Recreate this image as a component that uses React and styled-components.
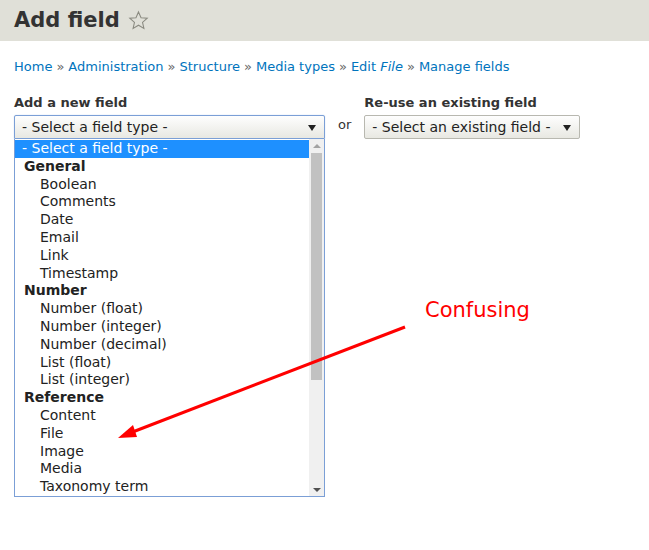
import React from "react";
import styled, { createGlobalStyle } from "styled-components";

const Global = createGlobalStyle`
  html, body { margin: 0; padding: 0; background: #fff; }
  body { font-family: "DejaVu Sans", "Liberation Sans", sans-serif; color: #333; }
`;

const Page = styled.div`
  position: relative;
  width: 649px;
  height: 550px;
  overflow: hidden;
`;

const Header = styled.header`
  height: 41px;
  background: #e0e0d8;
  display: flex;
  align-items: center;
  gap: 8px;
  padding-left: 14px;
  box-sizing: border-box;
`;

const Title = styled.h1`
  margin: 0;
  font-size: 21px;
  font-weight: bold;
  color: #333;
  line-height: 1;
`;

const Content = styled.main`
  padding: 17px 14px 0 14px;
`;

const Crumbs = styled.nav`
  font-size: 13px;
  line-height: 18px;
  color: #555;
  display: flex;
  gap: 4px;
  align-items: center;
`;

const Crumb = styled.a`
  color: #0074bd;
  text-decoration: none;
`;

const Sep = styled.span`
  color: #666;
  font-size: 13px;
`;

const Row = styled.div`
  display: flex;
  align-items: flex-start;
  margin-top: 18px;
`;

const Field = styled.div`
  display: flex;
  flex-direction: column;
  width: ${(p) => p.$w}px;
`;

const Label = styled.label`
  font-size: 13px;
  font-weight: bold;
  line-height: 18px;
  color: #333;
  margin-bottom: 3px;
`;

const SelectBox = styled.div`
  height: 24px;
  box-sizing: border-box;
  border: 1px solid ${(p) => (p.$focus ? "#7b9fd6" : "#b8b8b0")};
  border-radius: ${(p) => (p.$focus ? "2px 2px 0 0" : "2px")};
  background: linear-gradient(#fefefe, #e8e8e2);
  display: flex;
  align-items: center;
  justify-content: space-between;
  padding: 0 8px 0 7px;
  font-size: 14px;
  color: #222;
  box-shadow: ${(p) => (p.$focus ? "0 0 1px #9ab8e6" : "none")};
`;

const Caret = styled.span`
  width: 0;
  height: 0;
  border-left: 4.5px solid transparent;
  border-right: 4.5px solid transparent;
  border-top: 6px solid #222;
  margin-top: 1px;
`;

const Or = styled.span`
  font-size: 13px;
  color: #333;
  margin: 22px 13px 0 13px;
  line-height: 18px;
`;

const ListBox = styled.div`
  height: 358px;
  box-sizing: border-box;
  border: 1px solid #7b9fd6;
  border-top: none;
  display: flex;
  background: #fff;
`;

const Options = styled.div`
  flex: 1;
  padding-top: 1px;
`;

const Opt = styled.div`
  height: 17.8px;
  line-height: 17.8px;
  font-size: 14px;
  white-space: nowrap;
  padding-left: ${(p) => (p.$kind === "group" ? 9 : p.$kind === "sel" ? 7 : 25)}px;
  font-weight: ${(p) => (p.$kind === "group" ? "bold" : "normal")};
  background: ${(p) => (p.$kind === "sel" ? "#1e90ff" : "transparent")};
  color: ${(p) => (p.$kind === "sel" ? "#fff" : "#222")};
`;

const Scrollbar = styled.div`
  width: 15px;
  background: #f0f0f0;
  display: flex;
  flex-direction: column;
  align-items: center;
`;

const ScrollBtn = styled.div`
  height: 13px;
  width: 15px;
  display: flex;
  align-items: center;
  justify-content: center;
`;

const Tri = styled.span`
  width: 0;
  height: 0;
  border-left: 4px solid transparent;
  border-right: 4px solid transparent;
  ${(p) => (p.$up ? "border-bottom: 4px solid #a3a3a3;" : "border-top: 4px solid #505050;")}
`;

const Thumb = styled.div`
  width: 11px;
  height: 227px;
  background: #c1c1c1;
  margin-top: 1px;
`;

const Spacer = styled.div`
  flex: 1;
`;

const Annotation = styled.div`
  position: absolute;
  left: 425px;
  top: 298px;
  font-size: 21px;
  color: #f00;
  font-family: "DejaVu Sans", sans-serif;
`;

const Overlay = styled.svg`
  position: absolute;
  left: 0;
  top: 0;
  pointer-events: none;
`;

const items = [
  ["sel", "- Select a field type -"],
  ["group", "General"],
  ["opt", "Boolean"],
  ["opt", "Comments"],
  ["opt", "Date"],
  ["opt", "Email"],
  ["opt", "Link"],
  ["opt", "Timestamp"],
  ["group", "Number"],
  ["opt", "Number (float)"],
  ["opt", "Number (integer)"],
  ["opt", "Number (decimal)"],
  ["opt", "List (float)"],
  ["opt", "List (integer)"],
  ["group", "Reference"],
  ["opt", "Content"],
  ["opt", "File"],
  ["opt", "Image"],
  ["opt", "Media"],
  ["opt", "Taxonomy term"],
];

function Star() {
  return (
    <svg width="21" height="21" viewBox="0 0 24 24">
      <path
        d="M12 2.2l2.9 6.6 7.1.6-5.4 4.7 1.6 7-6.2-3.7-6.2 3.7 1.6-7L2 9.4l7.1-.6z"
        fill="none"
        stroke="#8a8a80"
        strokeWidth="1.2"
        strokeLinejoin="miter"
      />
    </svg>
  );
}

export default function App() {
  return (
    <Page>
      <Global />
      <Header>
        <Title>Add field</Title>
        <Star />
      </Header>
      <Content>
        <Crumbs>
          <Crumb href="#">Home</Crumb>
          <Sep>»</Sep>
          <Crumb href="#">Administration</Crumb>
          <Sep>»</Sep>
          <Crumb href="#">Structure</Crumb>
          <Sep>»</Sep>
          <Crumb href="#">Media types</Crumb>
          <Sep>»</Sep>
          <Crumb href="#">
            Edit <em>File</em>
          </Crumb>
          <Sep>»</Sep>
          <Crumb href="#">Manage fields</Crumb>
        </Crumbs>
        <Row>
          <Field $w={311}>
            <Label>Add a new field</Label>
            <SelectBox $focus>
              <span>- Select a field type -</span>
              <Caret />
            </SelectBox>
            <ListBox>
              <Options>
                {items.map(([k, t]) => (
                  <Opt key={t} $kind={k}>
                    {t}
                  </Opt>
                ))}
              </Options>
              <Scrollbar>
                <ScrollBtn>
                  <Tri $up />
                </ScrollBtn>
                <Thumb />
                <Spacer />
                <ScrollBtn>
                  <Tri />
                </ScrollBtn>
              </Scrollbar>
            </ListBox>
          </Field>
          <Or>or</Or>
          <Field $w={216}>
            <Label>Re-use an existing field</Label>
            <SelectBox>
              <span>- Select an existing field -</span>
              <Caret />
            </SelectBox>
          </Field>
        </Row>
      </Content>
      <Annotation>Confusing</Annotation>
      <Overlay width="649" height="550">
        <line x1="405" y1="327" x2="130" y2="433" stroke="#f00" strokeWidth="3" />
        <polygon points="118,438 133,425 137,437" fill="#f00" />
      </Overlay>
    </Page>
  );
}
